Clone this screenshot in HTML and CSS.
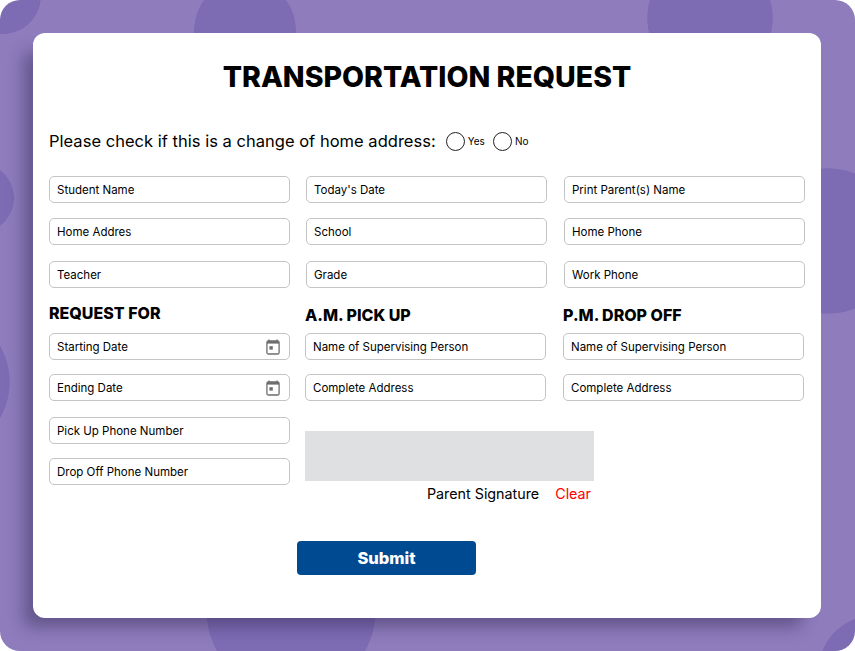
FILE: index.html
```html
<!DOCTYPE html>
<html lang="en">
<head>
  <meta charset="UTF-8">
  <meta name="viewport" content="width=device-width, initial-scale=1.0">
  <title>Transportation Request</title>
  <link rel="stylesheet" href="styles.css">
</head>
<body>

  <div class="panel">
    <form class="card">
      <h1>TRANSPORTATION REQUEST</h1>

      <div class="address-check">
        <span class="address-question">Please check if this is a change of home address:</span>
        <label class="choice"><input type="radio" name="changed"><span>Yes</span></label>
        <label class="choice"><input type="radio" name="changed"><span>No</span></label>
      </div>

      <!-- Contact details -->
      <div class="contact-grid">
        <div class="field">Student Name</div>
        <div class="field">Today's Date</div>
        <div class="field">Print Parent(s) Name</div>
        <div class="field">Home Addres</div>
        <div class="field">School</div>
        <div class="field">Home Phone</div>
        <div class="field">Teacher</div>
        <div class="field">Grade</div>
        <div class="field">Work Phone</div>
      </div>

      <!-- Request details -->
      <div class="request-grid">
        <div class="column">
          <h2 class="heading-first">REQUEST FOR</h2>
          <div class="field field-date">
            Starting Date
            <svg class="calendar" viewBox="0 0 14 16"><path d="M3 0.5v2M11 0.5v2" /><rect x="0.9" y="2" width="12.2" height="13" rx="1.6" /><rect class="calendar-top" x="1" y="2" width="12" height="2.6" /><rect class="calendar-dot" x="3.4" y="7.2" width="3.4" height="3.4" /></svg>
          </div>
          <div class="field field-date">
            Ending Date
            <svg class="calendar" viewBox="0 0 14 16"><path d="M3 0.5v2M11 0.5v2" /><rect x="0.9" y="2" width="12.2" height="13" rx="1.6" /><rect class="calendar-top" x="1" y="2" width="12" height="2.6" /><rect class="calendar-dot" x="3.4" y="7.2" width="3.4" height="3.4" /></svg>
          </div>
          <div class="field field-spaced">Pick Up Phone Number</div>
          <div class="field">Drop Off Phone Number</div>
        </div>

        <div class="column">
          <h2>A.M. PICK UP</h2>
          <div class="field">Name of Supervising Person</div>
          <div class="field">Complete Address</div>
          <div class="signature"></div>
          <div class="signature-label">
            <span>Parent Signature</span>
            <span class="clear">Clear</span>
          </div>
        </div>

        <div class="column">
          <h2>P.M. DROP OFF</h2>
          <div class="field">Name of Supervising Person</div>
          <div class="field">Complete Address</div>
        </div>
      </div>

      <button class="submit" type="submit">Submit</button>
    </form>
  </div>

</body>
</html>
```

FILE: styles.css
```css
body {
  margin: 0;
  background-color: #fff;
  font-family: "Inter", "Open Sans", sans-serif;
  color: #000;
}

/* Purple backdrop, the circles are hard edged gradients */
.panel {
  box-sizing: border-box;
  width: 855px;
  height: 651px;
  padding: 33px 34px 33px 33px;
  border-radius: 20px;
  overflow: hidden;
  background-color: #8e7cbd;
  background-image:
    radial-gradient(circle 38px at 3px -4px, #7d6bb4 99%, transparent 100%),
    radial-gradient(circle 51px at 245px 30px, #7d6bb4 99%, transparent 100%),
    radial-gradient(circle 63px at 710px 18px, #7d6bb4 99%, transparent 100%),
    radial-gradient(circle 35px at -21px 198px, #7d6bb4 99%, transparent 100%),
    radial-gradient(circle 73px at -63px 382px, #7d6bb4 99%, transparent 100%),
    radial-gradient(circle 73px at 828px 241px, #7d6bb4 99%, transparent 100%),
    radial-gradient(circle 85px at 291px 610px, #7d6bb4 99%, transparent 100%),
    radial-gradient(circle 57px at 875px 672px, #7d6bb4 99%, transparent 100%);
}

.card {
  box-sizing: border-box;
  width: 788px;
  height: 585px;
  padding: 0 16px;
  background-color: #fff;
  border-radius: 12px;
  box-shadow: -14px 14px 16px -5px rgba(40, 30, 70, 0.42);
}

h1 {
  margin: 0;
  padding-top: 26px;
  height: 50px;
  font-size: 28.5px;
  line-height: 36px;
  font-weight: 800;
  text-align: center;
}

.address-check {
  display: flex;
  align-items: center;
  height: 24px;
  margin-top: 20px;
}

.address-question {
  font-size: 16.5px;
  letter-spacing: 0.02px;
  margin-right: 10px;
}

.choice {
  display: flex;
  align-items: center;
  gap: 3px;
  margin-right: 8px;
  font-size: 10px;
}

.choice input {
  appearance: none;
  width: 19px;
  height: 19px;
  margin: 0;
  border: 1px solid #222;
  border-radius: 50%;
}

.contact-grid {
  display: grid;
  grid-template-columns: 257px 258px 241px;
  grid-template-rows: 27px 28px 27px;
  row-gap: 15px;
  margin-top: 23px;
}

.request-grid {
  display: grid;
  grid-template-columns: 256px 258px 241px;
  margin-top: 15px;
}

.field {
  box-sizing: border-box;
  display: flex;
  align-items: center;
  justify-content: space-between;
  width: 241px;
  height: 27px;
  padding: 0 7px;
  border: 1px solid #c4c4c6;
  border-radius: 5px;
  font-size: 11.5px;
}

.column .field {
  margin-bottom: 14px;
}

.column .field-spaced {
  margin-top: 16px;
}

h2 {
  margin: 0;
  height: 30px;
  font-size: 16px;
  line-height: 24px;
  font-weight: 800;
}

.heading-first {
  line-height: 20px;
}

.calendar {
  width: 14px;
  height: 16px;
  margin-right: 2px;
  fill: none;
  stroke: #6d6e70;
  stroke-width: 1.3;
}

.calendar-top,
.calendar-dot {
  fill: #6d6e70;
  stroke: none;
}

.signature {
  width: 289px;
  height: 50px;
  margin-top: 30px;
  background-color: #dfe0e2;
}

.signature-label {
  display: flex;
  justify-content: flex-end;
  gap: 16px;
  width: 286px;
  margin-top: 3px;
  font-size: 14.3px;
  line-height: 20px;
}

.clear {
  color: #f00;
}

.submit {
  display: block;
  width: 179px;
  height: 34px;
  margin: 37px 0 0 248px;
  border: none;
  border-radius: 4px;
  background-color: #004a92;
  color: #fff;
  font-family: inherit;
  font-size: 16.5px;
  font-weight: 800;
}
```
